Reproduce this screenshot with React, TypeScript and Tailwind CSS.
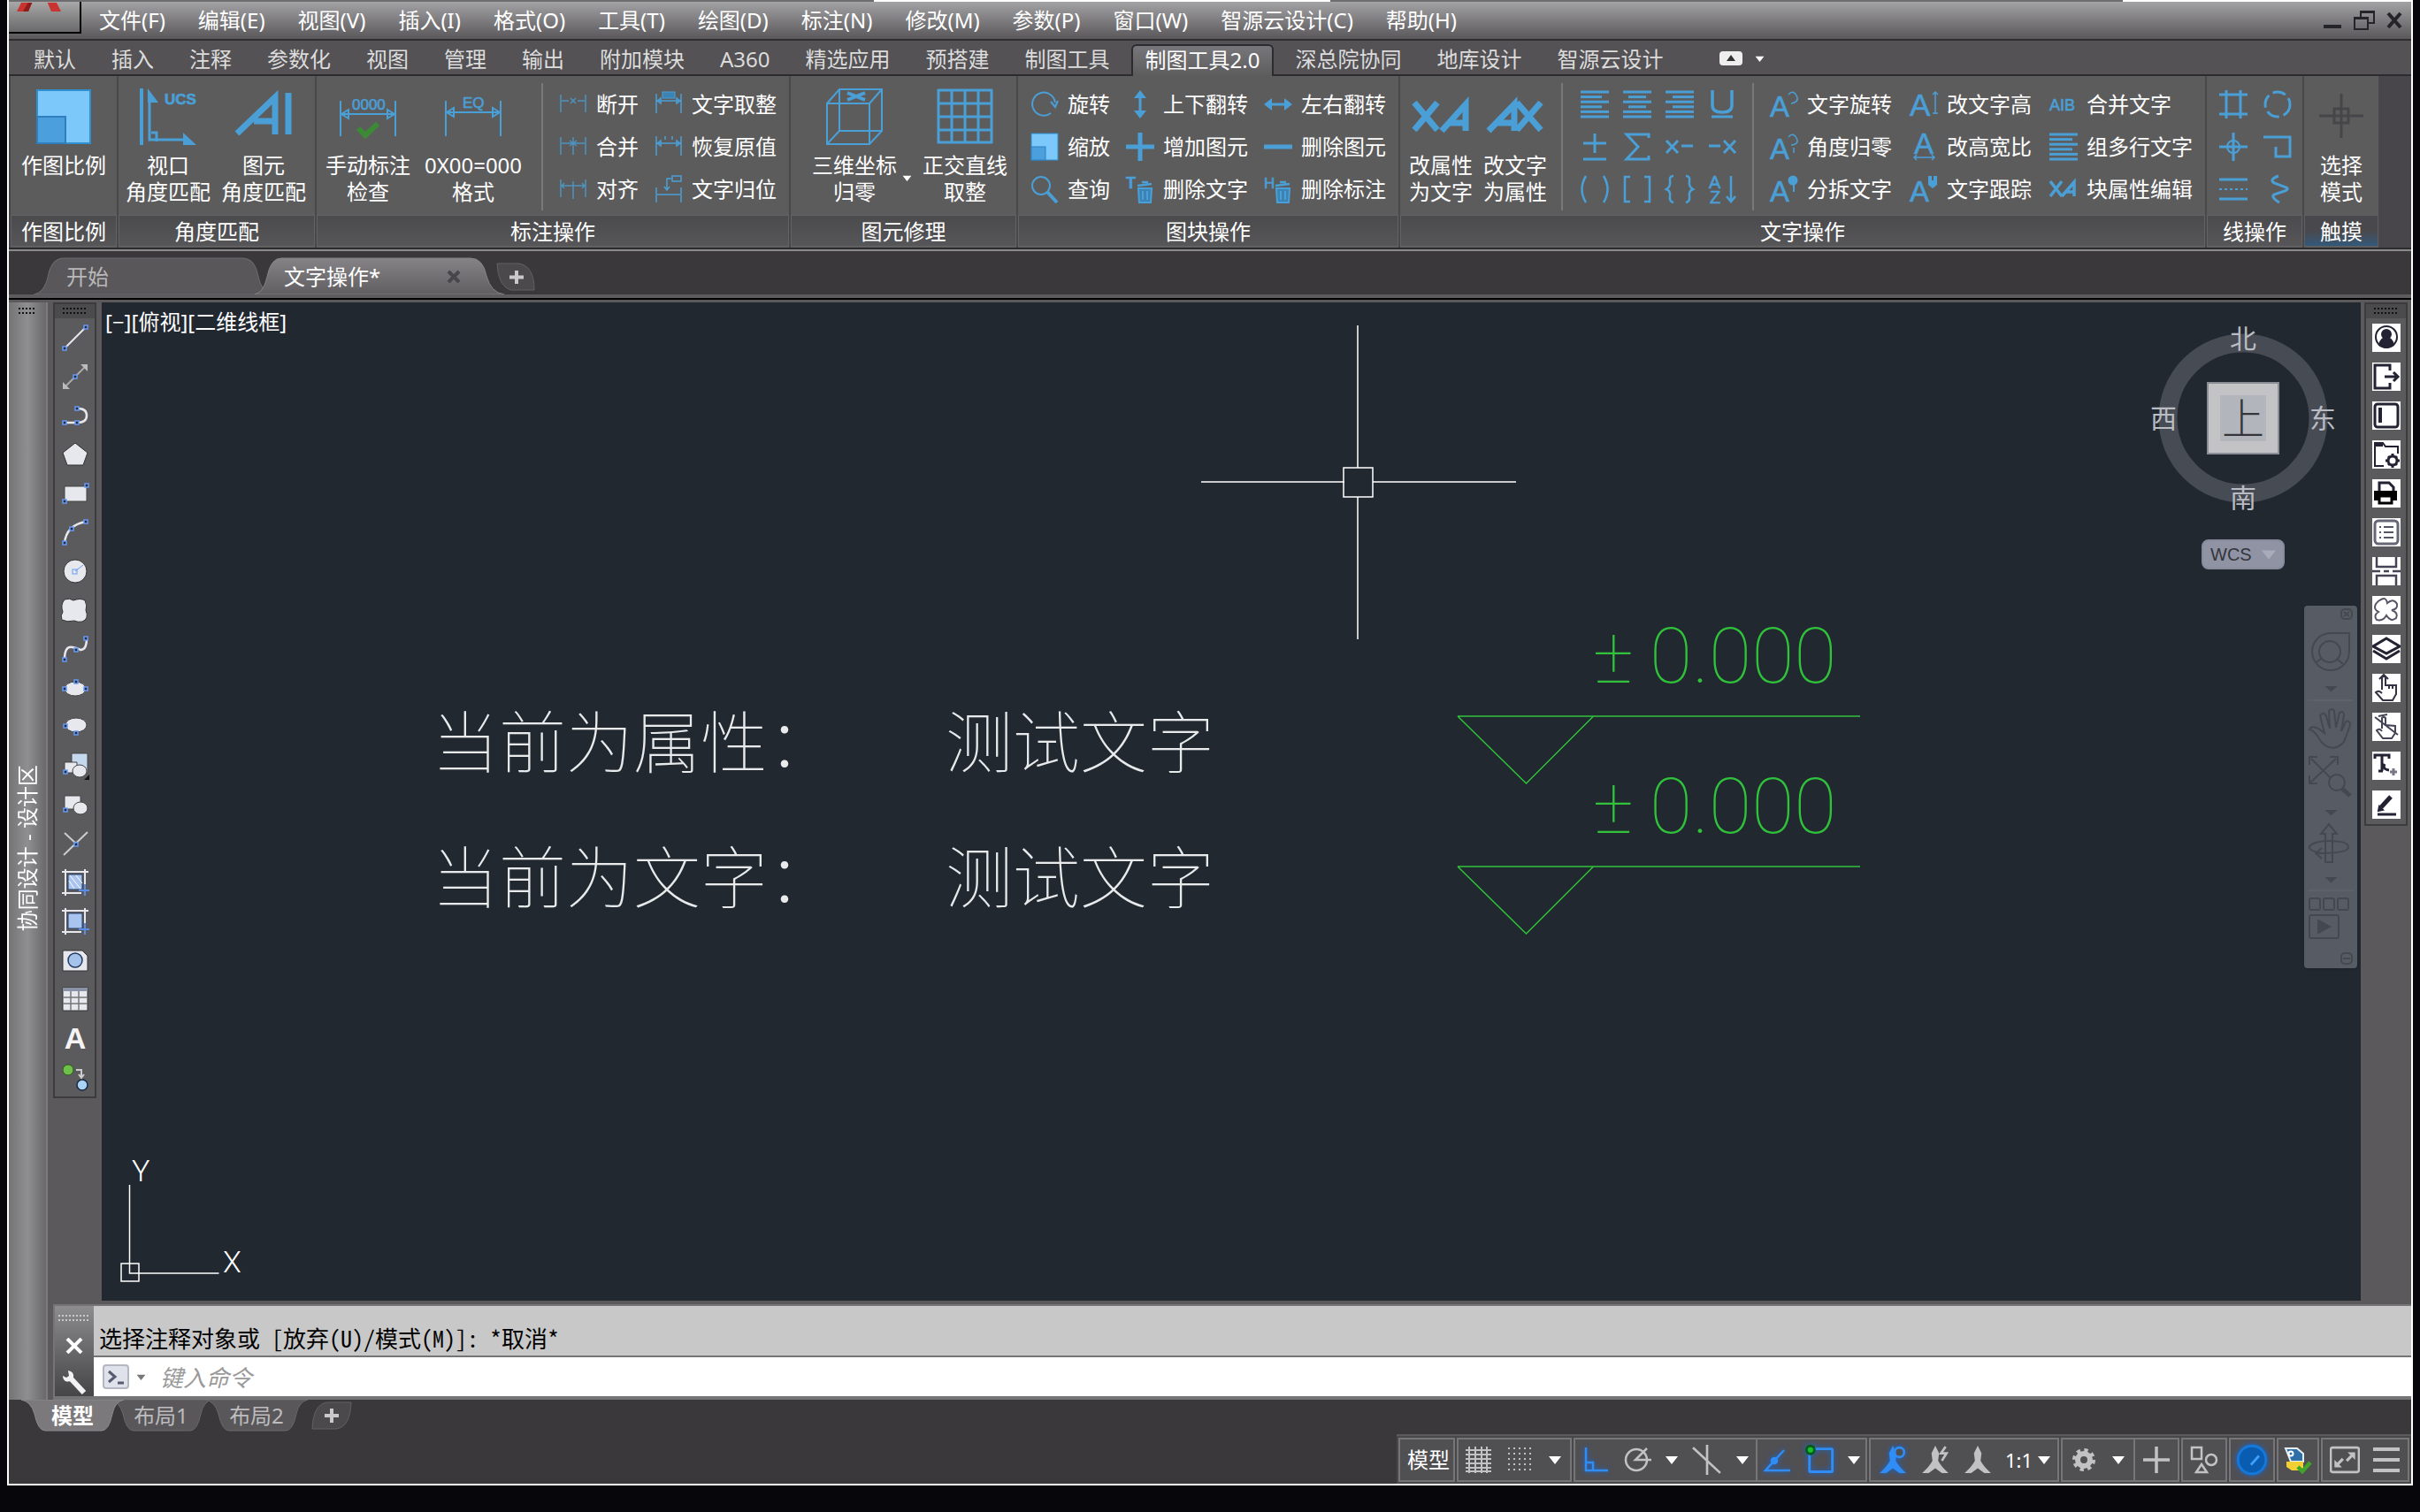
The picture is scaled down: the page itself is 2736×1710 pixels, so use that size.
import React from "react";

type Kids = { children?: React.ReactNode };

const B = "#4a9fd6";
const SANS = "font-['Noto_Sans','Noto_Sans_CJK_SC',sans-serif]";

/* ---------- icon frames ---------- */

function Ic({ children, s = 32 }: Kids & { s?: number }) {
  return (
    <svg aria-hidden="true" width={s} height={s} viewBox="0 0 32 32" fill="none" stroke={B} strokeWidth="2" className="shrink-0 overflow-visible">
      {children}
    </svg>
  );
}

function Big({ children }: Kids) {
  return (
    <svg aria-hidden="true" width="64" height="64" viewBox="0 0 64 64" fill="none" stroke={B} strokeWidth="2" className="shrink-0 overflow-visible">
      {children}
    </svg>
  );
}

function Letter({ x, y, size, children, bold }: Kids & { x: number; y: number; size: number; bold?: boolean }) {
  return (
    <text x={x} y={y} fontSize={size} fill={B} stroke={B} strokeWidth="0.6" fontFamily="Liberation Sans, sans-serif" fontWeight={bold ? 700 : 400}>
      {children}
    </text>
  );
}

function Caret({ w = 14, fill = "#fff" }: { w?: number; fill?: string }) {
  return (
    <svg aria-hidden="true" width={w} height={w - 4} viewBox="0 0 14 10" className="shrink-0">
      <path d="M0 1h14L7 10z" fill={fill} />
    </svg>
  );
}

/* ---------- ribbon ---------- */

const scaleIcon = (
  <>
    <rect x="1" y="1" width="30" height="30" fill="#7cc8fb" stroke="#2f8fcf" strokeWidth="1" />
    <rect x="1" y="16" width="16" height="15" fill="#4a9fdc" stroke="#2f7fbf" strokeWidth="1" />
  </>
);

const dimBase = <path d="M2 4v22M30 4v22M3 12h26M3 12l4-3v6zM29 12l-4-3v6z" strokeWidth="1.5" />;

const bars = (list: number[][]) => list.map(([x, w], i) => <path key={i} d={`M${x} ${2 + i * 5.6}h${w}`} strokeWidth="3" />);

const ICONS = {
  brk: <Ic><path d="M2 5v20M30 5v20M3 12h8M21 12h8M13 9l6 6M19 9l-6 6" strokeWidth="1.5" opacity="0.8" /></Ic>,
  merge: <Ic><path d="M2 5v20M30 5v20M16 5v20M3 12h26M12 9l4 3-4 3M20 9l-4 3 4 3" strokeWidth="1.5" opacity="0.8" /></Ic>,
  align: <Ic><path d="M2 5v20M30 5v20M16 7v20M3 12h26M6 9l-3 3 3 3M26 9l3 3-3 3" strokeWidth="1.5" opacity="0.8" /></Ic>,
  round: <Ic>{dimBase}<rect x="9" y="2" width="14" height="7" fill="#3a83b4" strokeWidth="1" /></Ic>,
  restore: <Ic>{dimBase}<path d="M12 4v4M20 4v4" strokeWidth="1.5" /></Ic>,
  home: <Ic><path d="M2 14v17M30 14v17M3 22h26M20 1h10v6H20zM19 4h-5v12M11 13l3 4 3-4" strokeWidth="1.5" /></Ic>,
  rotate: <Ic><path d="M23 26a13 13 0 1 1 5-12M23 13l5 6 3-7" /></Ic>,
  scale: <Ic>{scaleIcon}</Ic>,
  find: <Ic><circle cx="12" cy="12" r="10" /><path d="M19 19l11 12" strokeWidth="4" /></Ic>,
  ud: <Ic><path d="M16 4v24" strokeWidth="3" /><path d="M16 0l7 9H9zM16 32l7-9H9z" fill={B} stroke="none" /></Ic>,
  lr: <Ic><path d="M4 16h24" strokeWidth="3" /><path d="M0 16l9-7v14zM32 16l-9-7v14z" fill={B} stroke="none" /></Ic>,
  add: <Ic><path d="M16 0v32M0 16h32" strokeWidth="5" /></Ic>,
  del: <Ic><path d="M0 16h32" strokeWidth="5" /></Ic>,
  delT: <Ic><Letter x={0} y={15} size={18} bold>T</Letter><path d="M13 12l16-2M18 8h7" strokeWidth="2.5" /><path d="M14 15h15l-1 16H15z" fill="#3a83b4" /><path d="M19 18v10M24 18v10" /></Ic>,
  delH: <Ic><Letter x={0} y={15} size={17}>H</Letter><path d="M13 12l16-2M18 8h7" strokeWidth="2.5" /><path d="M14 15h15l-1 16H15z" fill="#3a83b4" /><path d="M19 18v10M24 18v10" /></Ic>,
  left: <Ic>{bars([[0, 32], [0, 24], [0, 32], [0, 24], [0, 32], [0, 32]])}</Ic>,
  center: <Ic>{bars([[0, 32], [6, 20], [0, 32], [6, 20], [0, 32], [0, 32]])}</Ic>,
  right: <Ic>{bars([[0, 32], [8, 24], [0, 32], [8, 24], [0, 32], [0, 32]])}</Ic>,
  under: <Ic><path d="M5 0v17q0 8 11 8t11-8V0" strokeWidth="3.5" /><path d="M4 30h24" strokeWidth="3" /></Ic>,
  pm: <Ic><path d="M16 1v22M3 12h26M3 30h26" strokeWidth="3" /></Ic>,
  sum: <Ic><path d="M29 6V2H4l13 14L4 30h25v-4" strokeWidth="3" /></Ic>,
  xm: <Ic><path d="M1 9l13 14M14 9L1 23M18 15h13" strokeWidth="3" /></Ic>,
  mx: <Ic><path d="M18 9l13 14M31 9L18 23M1 15h13" strokeWidth="3" /></Ic>,
  paren: <Ic><path d="M6 1q-9 15 0 30M26 1q9 15 0 30" strokeWidth="2.5" /></Ic>,
  brack: <Ic><path d="M8 2H2v28h6M24 2h6v28h-6" strokeWidth="2.5" /></Ic>,
  brace: <Ic><path d="M9 1q-5 0-4 6t-4 9q5 2 4 8t4 7M23 1q5 0 4 6t4 9q-5 2-4 8t-4 7" strokeWidth="2.5" /></Ic>,
  sort: <Ic><Letter x={1} y={15} size={20}>A</Letter><Letter x={2} y={32} size={20}>Z</Letter><path d="M26 1v28M21 24l5 6 5-6" strokeWidth="2.5" /></Ic>,
  aRot: <Ic><Letter x={0} y={30} size={33}>A</Letter><path d="M21 5q5-6 9 1t-6 9" strokeWidth="1.5" /></Ic>,
  aZero: <Ic><Letter x={0} y={30} size={33}>A</Letter><path d="M21 5q5-6 9 1t-6 8M27 17v6" strokeWidth="1.5" /></Ic>,
  aPin: <Ic><Letter x={0} y={30} size={33}>A</Letter><circle cx="26" cy="6" r="5.500" fill={B} stroke="none" /><path d="M27 10v9" /></Ic>,
  aHigh: <Ic><Letter x={0} y={29} size={35}>A</Letter><path d="M29 2v25M26 5l3-3 3 3M26 26h6" strokeWidth="1.5" /></Ic>,
  aWide: <Ic><Letter x={5} y={24} size={33}>A</Letter><path d="M5 28h23M8 25l-3 3 3 3M25 25l3 3-3 3" strokeWidth="1.5" /></Ic>,
  aTrack: <Ic><Letter x={0} y={30} size={33}>A</Letter><path d="M21 1v10l5 4 5-4V1h-4v5h-2V1z" fill={B} stroke="none" /></Ic>,
  aib: <Ic><Letter x={0} y={23} size={18}>AIB</Letter></Ic>,
  multi: <Ic>{bars([[0, 32], [0, 26], [0, 32], [0, 26], [0, 32], [0, 32]])}</Ic>,
  xa: <Ic><path d="M1 7l13 17M14 7L1 24M14 24L28 8v16M19 19h9" strokeWidth="3.500" /></Ic>,
  hash: <Ic><path d="M8 0v32M24 0v32M0 5h32M0 27h32" strokeWidth="3" /></Ic>,
  dash: <Ic><circle cx="16" cy="16" r="14" strokeWidth="3" strokeDasharray="15 5" /></Ic>,
  cross: <Ic><path d="M16 0v32M0 16h32" strokeWidth="3" /><circle cx="16" cy="16" r="7" /></Ic>,
  hook: <Ic><path d="M0 5h30v22H14V16" strokeWidth="3" /></Ic>,
  lines: <Ic><path d="M0 5h32M0 27h32" strokeWidth="3" /><path d="M0 16h32" strokeDasharray="3 3" /></Ic>,
  wave: <Ic><path d="M17 1Q6 5 12 9l14 5q3 2-2 4l-12 4q-4 3 6 9" strokeWidth="3" /></Ic>,
};

function Small({ icon, label }: { icon: keyof typeof ICONS; label: string }) {
  return (
    <button type="button" className="flex items-center gap-2.5">
      {ICONS[icon]}
      {label}
    </button>
  );
}

function Large({ lines, children, w = "" }: Kids & { lines: string[]; w?: string }) {
  return (
    <button type="button" className={`flex flex-col items-center gap-2 pt-1.5 leading-[30px] ${w}`}>
      {children}
      <span className="flex flex-col items-center">
        {lines.map((l) => (
          <span key={l}>{l}</span>
        ))}
      </span>
    </button>
  );
}

function Panel({ title, pad = "px-2.5", touch, children }: Kids & { title: string; pad?: string; touch?: boolean }) {
  return (
    <section aria-label={title} className="flex flex-col border-r-2 border-[#48474a] bg-[#5d5c5d]">
      <div className={`flex h-[157px] items-start gap-3 pt-2 ${pad}`}>{children}</div>
      <h2
        className={
          touch
            ? "flex h-9 items-center justify-center border border-[#5f5e60] bg-linear-to-b from-[#49484c] via-[#49484c] to-[#31597a] pt-0.5"
            : "flex h-9 items-center justify-center border border-[#636264] bg-linear-to-b from-[#4b4a4d] to-[#565558] pt-0.5"
        }
      >
        {title}
      </h2>
    </section>
  );
}

const Rule = ({ m = "mx-1.5" }: { m?: string }) => <div className={`h-36 w-0.5 bg-[#79787a] ${m}`} />;
const ROWS = "grid grid-flow-col grid-rows-3 auto-rows-[48px] h-36";

function Ribbon() {
  return (
    <div className="flex h-[196px] border-b-2 border-[#2c2b2d] bg-[#48464a] pl-0.5 text-2xl text-white">
      <Panel title="作图比例" pad="px-3">
        <Large lines={["作图比例"]}>
          <svg aria-hidden="true" width="64" height="64" viewBox="0 0 32 32">{scaleIcon}</svg>
        </Large>
      </Panel>
      <Panel title="角度匹配" pad="pl-2 pr-2.5">
        <Large lines={["视口", "角度匹配"]}>
          <Big>
            <path d="M2 0v64" strokeWidth="4" />
            <path d="M11 6v52h42M13 50h6v10" strokeWidth="3" />
            <path d="M9 0v16h12zM64 64H49V50z" fill={B} stroke="none" />
            <Letter x={28} y={18} size={17} bold>UCS</Letter>
          </Big>
        </Large>
        <Large lines={["图元", "角度匹配"]}>
          <Big>
            <path d="M2 51L45 10v42M21 37h24M60 5v47" strokeWidth="7" />
          </Big>
        </Large>
      </Panel>
      <Panel title="标注操作" pad="pl-2.5 pr-3.5">
        <Large lines={["手动标注", "检查"]}>
          <Big>
            <path d="M1 14v40M63 14v40M3 29h58M2 29l8-5v10zM62 29l-8-5v10z" />
            <Letter x={14} y={24} size={17}>0000</Letter>
            <path d="M21 45l8 8 14-13" stroke="#3c8a35" strokeWidth="6" />
          </Big>
        </Large>
        <Large lines={["0X00=000", "格式"]} w="w-[118px]">
          <Big>
            <path d="M1 14v40M63 14v40M3 27h58M2 27l8-5v10zM62 27l-8-5v10z" />
            <Letter x={20} y={22} size={17}>EQ</Letter>
          </Big>
        </Large>
        <Rule />
        <div className={`${ROWS} gap-x-4.5`}>
          <Small icon="brk" label="断开" />
          <Small icon="merge" label="合并" />
          <Small icon="align" label="对齐" />
          <Small icon="round" label="文字取整" />
          <Small icon="restore" label="恢复原值" />
          <Small icon="home" label="文字归位" />
        </div>
      </Panel>
      <Panel title="图元修理" pad="pl-6 pr-2.5">
        <div className="flex items-start gap-1.5">
          <Large lines={["三维坐标", "归零"]}>
            <Big>
              <path d="M1 17L15 1h48v47L49 63H1zM1 17h48v46M49 17L63 1M15 1v47h48M15 48L1 63" />
              <path d="M24 5l20 8M44 5l-20 8" strokeWidth="4" />
            </Big>
          </Large>
          <button type="button" aria-label="更多归零选项" className="mt-26">
            <Caret w={11} />
          </button>
        </div>
        <Large lines={["正交直线", "取整"]}>
          <Big>
            <path d="M2 1v61M17 1v61M32 1v61M47 1v61M62 1v61M1 2h62M1 17h62M1 32h62M1 47h62M1 61h62" strokeWidth="3" />
          </Big>
        </Large>
      </Panel>
      <Panel title="图块操作" pad="pl-3.5 pr-3.5">
        <div className={`${ROWS} gap-x-4.5`}>
          <Small icon="rotate" label="旋转" />
          <Small icon="scale" label="缩放" />
          <Small icon="find" label="查询" />
          <Small icon="ud" label="上下翻转" />
          <Small icon="add" label="增加图元" />
          <Small icon="delT" label="删除文字" />
          <Small icon="lr" label="左右翻转" />
          <Small icon="del" label="删除图元" />
          <Small icon="delH" label="删除标注" />
        </div>
      </Panel>
      <Panel title="文字操作" pad="pl-2.5 pr-3.5">
        <Large lines={["改属性", "为文字"]}>
          <Big>
            <path d="M2 16l26 31M28 16L2 47M33 48L60 18v30M41 39h19" strokeWidth="7" />
          </Big>
        </Large>
        <Large lines={["改文字", "为属性"]}>
          <Big>
            <path d="M2 48L31 18v30M12 39h19M34 16l27 31M61 16L34 47" strokeWidth="7" />
          </Big>
        </Large>
        <Rule m="ml-1 mr-2" />
        <div className={`${ROWS} gap-x-4`}>
          {(
            [
              ["left", "左对齐"], ["pm", "正负号"], ["paren", "圆括号"],
              ["center", "居中"], ["sum", "求和"], ["brack", "方括号"],
              ["right", "右对齐"], ["xm", "前缀"], ["brace", "花括号"],
              ["under", "下划线"], ["mx", "后缀"], ["sort", "排序"],
            ] as [keyof typeof ICONS, string][]
          ).map(([k, label]) => (
            <button key={k} type="button" aria-label={label} className="flex items-center">
              {ICONS[k]}
            </button>
          ))}
        </div>
        <Rule />
        <div className={`${ROWS} gap-x-5`}>
          <Small icon="aRot" label="文字旋转" />
          <Small icon="aZero" label="角度归零" />
          <Small icon="aPin" label="分拆文字" />
          <Small icon="aHigh" label="改文字高" />
          <Small icon="aWide" label="改高宽比" />
          <Small icon="aTrack" label="文字跟踪" />
          <Small icon="aib" label="合并文字" />
          <Small icon="multi" label="组多行文字" />
          <Small icon="xa" label="块属性编辑" />
        </div>
      </Panel>
      <Panel title="线操作" pad="pl-3.5 pr-3">
        <div className={`${ROWS} gap-x-4.5`}>
          {(
            [
              ["hash", "井字线"], ["cross", "十字线"], ["lines", "平行线"],
              ["dash", "虚线圆"], ["hook", "折线"], ["wave", "波浪线"],
            ] as [keyof typeof ICONS, string][]
          ).map(([k, label]) => (
            <button key={k} type="button" aria-label={label} className="flex items-center">
              {ICONS[k]}
            </button>
          ))}
        </div>
      </Panel>
      <Panel title="触摸" pad="px-2.5" touch>
        <Large lines={["选择", "模式"]}>
          <svg aria-hidden="true" width="64" height="64" viewBox="0 0 64 64" fill="none" stroke="#46454a" strokeWidth="3">
            <path d="M32 6v50M7 31h50M24 23h16v16H24z" />
          </svg>
        </Large>
      </Panel>
    </div>
  );
}

/* ---------- bars above the drawing ---------- */

const MENUS = ["文件(F)", "编辑(E)", "视图(V)", "插入(I)", "格式(O)", "工具(T)", "绘图(D)", "标注(N)", "修改(M)", "参数(P)", "窗口(W)", "智源云设计(C)", "帮助(H)"];
const TABS = ["默认", "插入", "注释", "参数化", "视图", "管理", "输出", "附加模块", "A360", "精选应用", "预搭建", "制图工具", "制图工具2.0", "深总院协同", "地库设计", "智源云设计"];

function MenuBar() {
  return (
    <header className="flex h-11 items-center border-b-2 border-[#2f2d30] bg-linear-to-b from-[#a3a2a4] to-[#5a585b] text-2xl text-white">
      <button type="button" aria-label="应用程序菜单" className="mr-5 h-9 w-[82px] self-start border-r-2 border-b-2 border-black bg-linear-to-b from-[#a8a8a8] to-[#6a696b]">
        <svg aria-hidden="true" width="64" height="32" viewBox="0 0 64 32">
          <path d="M9 10L16-4h12l-6 14zM42-4h10l7 14H48z" fill="#c8342f" />
          <path d="M16 10L24-4h4l-6 14z" fill="#8d1d1b" />
        </svg>
      </button>
      <nav aria-label="主菜单" className="flex gap-[37px]">
        {MENUS.map((m) => (
          <button key={m} type="button" className="whitespace-nowrap">{m}</button>
        ))}
      </nav>
      <div className="ml-auto flex items-center gap-3 pr-2.5">
        <button type="button" aria-label="最小化">
          <svg width="22" height="24" viewBox="0 0 22 24"><path d="M1 19h20" stroke="#252428" strokeWidth="4" /></svg>
        </button>
        <button type="button" aria-label="还原">
          <svg width="26" height="24" viewBox="0 0 26 24" fill="none" stroke="#252428" strokeWidth="2"><path d="M9 8V2h15v13h-6M9 3h15" /><path d="M2 9h15v13H2zM2 10h15" /></svg>
        </button>
        <button type="button" aria-label="关闭">
          <svg width="18" height="20" viewBox="0 0 18 20"><path d="M2 2l14 16M16 2L2 18" stroke="#252428" strokeWidth="4" /></svg>
        </button>
      </div>
    </header>
  );
}

function RibbonTabs() {
  return (
    <div role="tablist" className="flex h-10 items-end border-b-2 border-[#2c2b2d] bg-[#545255] pl-2 text-2xl text-[#dcdcdc]">
      {TABS.map((t) =>
        t === "制图工具2.0" ? (
          <button key={t} type="button" role="tab" aria-selected="true" className="mx-1 -mb-0.5 h-[36px] rounded-t-md border-2 border-b-0 border-[#2c2b2d] bg-linear-to-b from-[#77767a] to-[#5d5c5d] px-3.5 pb-0.5 leading-8 text-white">
            {t}
          </button>
        ) : (
          <button key={t} type="button" role="tab" aria-selected="false" className="mx-1 h-[34px] px-4 leading-8">
            {t}
          </button>
        ),
      )}
      <button type="button" aria-label="最小化功能区" className="ml-11 flex h-9 items-center gap-3.5">
        <svg aria-hidden="true" width="26" height="16" viewBox="0 0 26 16"><rect width="26" height="16" rx="4" fill="#eee" /><path d="M13 4l5 7H8z" fill="#333" /></svg>
        <Caret w={11} />
      </button>
    </div>
  );
}

function DocTabs() {
  return (
    <div className="flex h-[51px] items-end border-t-2 border-[#8b8a8c] bg-[#3a383b] pl-7 text-2xl">
      <button type="button" className="relative h-[42px] w-[270px] pt-0.5 pl-[37px] text-left text-[#b8b7b9]">
        <svg aria-hidden="true" viewBox="0 0 268 42" preserveAspectRatio="none" className="absolute inset-0 h-full w-full">
          <path d="M0 42q12-2 16-20 4-21 18-21h200q14 0 18 20 4 19 16 21z" fill="#59575a" stroke="#6d6b6e" />
        </svg>
        <span className="relative">开始</span>
      </button>
      <div className="relative -ml-5 flex h-[42px] w-[287px] items-center justify-between pt-0.5 pr-[54px] pl-[33px]">
        <svg aria-hidden="true" viewBox="0 0 287 42" preserveAspectRatio="none" className="absolute inset-0 h-full w-full">
          <defs>
            <linearGradient id="doc" x2="0" y2="1"><stop stopColor="#858386" /><stop offset="1" stopColor="#605e61" /></linearGradient>
          </defs>
          <path d="M0 42q10-2 14-20Q18 1 30 1h214q14 0 18 20 5 19 20 21z" fill="url(#doc)" stroke="#858386" />
        </svg>
        <button type="button" className="relative text-white">文字操作*</button>
        <button type="button" aria-label="关闭标签" className="relative">
          <svg width="16" height="16" viewBox="0 0 16 16"><path d="M2 2l12 12M14 2L2 14" stroke="#48464a" strokeWidth="4" /></svg>
        </button>
      </div>
      <button type="button" aria-label="新建图形" className="-ml-3.5 mb-1">
        <svg width="44" height="32" viewBox="0 0 44 32"><path d="M1 1h24q18 2 18 30H16Q2 26 1 1z" fill="#4b494c" stroke="#626063" /><path d="M23 9v15M15 16.500h16" stroke="#c9c9c9" strokeWidth="4" /></svg>
      </button>
    </div>
  );
}

/* ---------- left draw toolbar ---------- */

const W = "#e6e8ee";
const Grip = ({ x, y }: { x: number; y: number }) => <rect x={x - 2} y={y - 2} width="4" height="4" fill="#1d2a4a" stroke="#6a9bf0" strokeWidth="1.5" />;

const DRAW: [string, React.ReactNode][] = [
  ["直线", <><path d="M4 28L28 4" stroke={W} strokeWidth="2" /><Grip x={4} y={28} /><Grip x={28} y={4} /></>],
  ["构造线", <><path d="M5 27L27 5" stroke="#aaa" strokeWidth="2" /><path d="M2 30v-8l8 8zM30 2v8l-8-8z" fill="#bbb" /><Grip x={16} y={16} /></>],
  ["多段线", <><path d="M4 24h14q11 0 11-8t-10-8" fill="none" stroke={W} strokeWidth="2.5" /><Grip x={4} y={24} /><Grip x={18} y={24} /><Grip x={18} y={8} /></>],
  ["多边形", <path d="M16 3l14 11-5 14H7L2 14z" fill={W} stroke="#333" />],
  ["矩形", <><path d="M4 8h25v17H4z" fill={W} stroke="#444" /><Grip x={4} y={25} /><Grip x={29} y={7} /></>],
  ["圆弧", <><path d="M4 28Q6 8 28 4" fill="none" stroke={W} strokeWidth="2.500" /><Grip x={4} y={28} /><Grip x={12} y={12} /><Grip x={28} y={4} /></>],
  ["圆", <><circle cx="16" cy="16" r="13" fill={W} stroke="#333" /><path d="M16 16l9-7" stroke="#6a9bf0" /><rect x="13" y="14" width="5" height="5" fill="none" stroke="#6a9bf0" /></>],
  ["修订云线", <path d="M4 4q6-2 10 1 8-3 13 0 3 6 1 11 4 10-4 13-5 1-9-1-8 2-14-1-2-5 1-9-3-8 2-14z" fill={W} stroke="#333" />],
  ["样条曲线", <><path d="M4 28q0-16 9-14t9 3q7 0 7-13" fill="none" stroke={W} strokeWidth="2.500" /><Grip x={4} y={28} /><Grip x={17} y={17} /><Grip x={28} y={4} /></>],
  ["椭圆", <><ellipse cx="16" cy="17" rx="12" ry="8" fill={W} stroke="#444" /><Grip x={4} y={17} /><Grip x={17} y={9} /><Grip x={28} y={17} /></>],
  ["椭圆弧", <><ellipse cx="17" cy="14" rx="12" ry="8" fill={W} stroke="#444" /><Grip x={5} y={15} /><Grip x={17} y={23} /></>],
  ["插入块", <><path d="M12 2h18v22H12z" fill="#c6d8ee" stroke="#444" /><path d="M4 12h14v12H4z" fill={W} stroke="#444" /><ellipse cx="21" cy="22" rx="8" ry="7" fill={W} stroke="#444" /><Grip x={5} y={23} /><path d="M32 26v6h-6z" fill="#111" /></>],
  ["创建块", <><path d="M4 6h18v15H4z" fill={W} stroke="#444" /><ellipse cx="22" cy="20" rx="8" ry="7" fill={W} stroke="#444" /><Grip x={5} y={22} /></>],
  ["点", <><path d="M3 29L30 3M4 4l14 13" stroke="#ccc" strokeWidth="2" /><Grip x={17} y={17} /></>],
  ["图案填充", <><path d="M1 4h30M1 28h22M5 1v30M27 1v22" stroke={W} strokeWidth="2" /><path d="M8 7h16v17H8z" fill="#a9c4ee" stroke="#26406f" /><path d="M9 14l6 9M10 8l12 15M17 8l7 9" stroke="#fff" /><path d="M27 18v13M20 25h12" stroke="#5a8de8" strokeWidth="2" /></>],
  ["渐变色", <><path d="M1 4h30M1 28h22M5 1v30M27 1v22" stroke={W} strokeWidth="2" /><path d="M8 7h16v17H8z" fill="#a9c4ee" stroke="#26406f" /><path d="M27 18v13M20 25h12" stroke="#5a8de8" strokeWidth="2" /></>],
  ["面域", <><path d="M2 5h22l6 6v17H2z" fill={W} stroke="#333" /><circle cx="16" cy="16" r="8" fill="#a4c3ea" stroke="#23395e" strokeWidth="1.500" /></>],
  ["表格", <><path d="M2 3h28v26H2z" fill={W} stroke="#333" /><path d="M2 5h28" stroke="#8a93a8" strokeWidth="4" /><path d="M2 14h28M2 21h28M11 7v22M20 7v22" stroke="#777" strokeWidth="1.500" /></>],
  ["多行文字", <text x="16" y="28" textAnchor="middle" fontSize="34" fontWeight="700" fontFamily="Liberation Sans, sans-serif" fill="#f4f4f4">A</text>],
  ["添加选定对象", <><circle cx="8" cy="8" r="6" fill="#6fc04a" stroke="#2a5a18" /><circle cx="24" cy="25" r="6" fill="#a9d2f4" stroke="#1a2a44" strokeWidth="1.500" /><path d="M17 8h6v8M20 13l3 4 3-4" fill="none" stroke="#ccc" strokeWidth="2" /></>],
];

function DotGrip({ n, fill = "#111" }: { n: number; fill?: string }) {
  return (
    <svg aria-hidden="true" width={n * 4} height="8" viewBox={`0 0 ${n * 4} 8`} className="shrink-0">
      {Array.from({ length: n }, (_, i) => (
        <path key={i} d={`M${i * 4} 0h2v2h-2zM${i * 4} 5h2v2h-2z`} fill={fill} />
      ))}
    </svg>
  );
}

function DrawBar() {
  return (
    <div role="toolbar" aria-label="绘图" className="mx-1.5 flex w-[49px] flex-col items-center self-start border-2 border-[#3c3b3d] bg-[#5b5a5c]">
      <div className="flex h-4 w-full items-center justify-center bg-[#4b4a4c]"><DotGrip n={7} /></div>
      {DRAW.map(([label, art]) => (
        <button key={label} type="button" aria-label={label} className="flex h-11 items-center">
          <svg width="32" height="32" viewBox="0 0 32 32" className="overflow-visible">{art}</svg>
        </button>
      ))}
    </div>
  );
}

/* ---------- right toolbar ---------- */

const TOOLS: [string, React.ReactNode][] = [
  ["用户", <><circle cx="16" cy="15" r="12" /><circle cx="16" cy="12" r="5" fill="#223" /><path d="M8 24q2-8 8-8t8 8q-8 6-16 0z" fill="#223" /></>],
  ["导出", <path d="M20 9V3H3v26h17v-6M14 16h15M24 11l5 5-5 5" strokeWidth="3" />],
  ["侧栏", <><rect x="3" y="3" width="26" height="26" rx="3" strokeWidth="3" /><path d="M9 7v17" strokeWidth="4" /></>],
  ["文件夹设置", <><path d="M13 29H3V3h9l3 4h14v8" /><path d="M3 5h9" strokeWidth="4" /><circle cx="23" cy="23" r="5" strokeWidth="3" /><path d="M23 15v3M23 28v3M15 23h3M28 23h3M18 18l1 1M27 27l1 1M28 18l-1 1M18 28l1-1" strokeWidth="3" /></>],
  ["打印", <><path d="M8 14V4h11l5 5v5" strokeWidth="3" /><path d="M3 14h24v9H3z" fill="#000" stroke="#000" /><path d="M8 19h14v8H8z" fill="#fff" stroke="#000" strokeWidth="3" /></>],
  ["清单", <><rect x="3" y="3" width="26" height="26" rx="4" stroke="#667" strokeWidth="3" /><path d="M8 10h2M13 10h11M8 16h2M13 16h11M8 22h2M13 22h11" stroke="#556" /></>],
  ["打断", <path d="M5 0v11h22V0M5 32V21h22v11M0 16h9M13 16h6M23 16h9" stroke="#445" strokeWidth="2.5" />],
  ["云线", <path d="M10 4q6-3 7 4 7-6 11 1 1 6-6 7 8 3 5 9-6 5-11-3-4 7-11 5-4-5 2-9-6-3-3-9 3-4 6-5z" stroke="#556" />],
  ["图层", <><path d="M16 4l15 9-15 8-15-8z" strokeWidth="3" /><path d="M1 18l15 9 15-9" strokeWidth="3" /></>],
  ["点选", <path d="M11 18V4q2-2 4 0v9h12v10l-4 7H12l-8-9q3-3 7 1M19 13v4M23 13v4M8 6l5-5 5 5" stroke="#334" />],
  ["取消点选", <path d="M11 18V6q2-2 4 0v8l11 1v8l-4 6H12l-7-9q3-3 6 1M3 5l26 20M7 4l10-2" stroke="#445" />],
  ["文字添加", <><path d="M3 8V4h16v4M11 4v18M7 22h5M14 14q-3 6 5 7" strokeWidth="3" /><path d="M20 23h8M24 19v8" stroke="#778" strokeWidth="3" /></>],
  ["编辑", <><path d="M6 27h21" strokeWidth="3" /><path d="M10 19L21 7" strokeWidth="5" /><path d="M7 23l1-5 4 4z" fill="#223" /></>],
];

function ToolBar() {
  return (
    <div role="toolbar" aria-label="协同工具" className="mx-1 flex w-[49px] flex-col items-center self-start border-2 border-[#3c3b3d] bg-[#5b5a5c]">
      <div className="flex h-4 w-full items-center justify-center bg-[#4b4a4c]"><DotGrip n={7} /></div>
      {TOOLS.map(([label, art]) => (
        <button key={label} type="button" aria-label={label} className="flex h-11 items-center">
          <svg width="32" height="32" viewBox="0 0 32 32" fill="none" stroke="#223" strokeWidth="2" className="bg-white">{art}</svg>
        </button>
      ))}
    </div>
  );
}

/* ---------- drawing area ---------- */

function Level({ y }: { y: number }) {
  return <path d={`M1533 ${y}h455M1533 ${y}l77.500 76 76-76`} stroke="#2fc23a" strokeWidth="1.500" fill="none" />;
}

function NavBar() {
  return (
    <div role="toolbar" aria-label="导航栏" className="absolute top-[343px] right-1 w-15 rounded bg-[#575c64] shadow">
      <svg aria-hidden="true" width="60" height="410" viewBox="0 0 60 410" fill="none" stroke="#444950" strokeWidth="2">
        <rect x="42" y="4" width="12" height="11" rx="4" /><path d="M45 7l6 5M51 7l-6 5" />
        <path d="M30 31h21v20a21 21 0 1 1-21-20z" /><circle cx="29" cy="52" r="12" /><path d="M14 64l6-5M44 66l-6-5" />
        <path d="M26 92h9l-4.500 4z" fill="#444950" />
        <path d="M4 107h52M4 322h52" stroke="#646971" strokeWidth="1" />
        <path d="M18 152q-6-11-12-12 2-5 10-1l7 5-5-20q4-5 7 1l4 14-1-20q4-4 6 0l2 19 4-17q5-3 5 3l-3 18 5-11q5-2 5 4-4 12-7 19-8 9-17 6-6-2-10-8z" />
        <path d="M8 173l30 30M36 173L7 200M6 180v-9h9M29 171h9v9M6 192v9h9" /><circle cx="37" cy="200" r="9" fill="#575c64" /><path d="M43 207l9 8" strokeWidth="5" />
        <path d="M26 232h9l-4.500 4zM26 308h9l-4.500 4z" fill="#444950" />
        <path d="M24 290v-32h-5l9-11 9 11h-5v32z" /><path d="M20 280q-16-3-14-8 6-6 22-6 22 0 22 7t-35 7M20 274l-7 6 7 6" />
        <rect x="6" y="331" width="12" height="13" rx="2" /><rect x="22" y="331" width="12" height="13" rx="2" /><rect x="38" y="331" width="12" height="13" rx="2" />
        <rect x="6" y="350" width="33" height="26" rx="2" /><path d="M16 356l13 7-13 7z" fill="#444950" />
        <rect x="42" y="393" width="12" height="12" rx="4" /><path d="M44 399h8" />
      </svg>
    </div>
  );
}

function ViewCube() {
  return (
    <div className="absolute top-[26px] right-[28px] flex flex-col items-center text-[30px] leading-[30px] text-[#b9bcc2]">
      <div className="relative grid h-[210px] w-[210px] grid-cols-[30px_1fr_30px] grid-rows-[30px_1fr_30px] place-items-center">
        <svg aria-hidden="true" viewBox="0 0 210 210" className="absolute inset-0 h-full w-full">
          <circle cx="105" cy="105" r="85" fill="none" stroke="#474b54" strokeWidth="21" />
        </svg>
        <span className="relative col-start-2 row-start-1">北</span>
        <span className="relative col-start-1 row-start-2">西</span>
        <button type="button" aria-label="上视图" className="relative col-start-2 row-start-2 flex h-[82px] w-[82px] items-center justify-center border-2 border-[#8b8e94] bg-[#c3c3c5]">
          <span className="flex h-[52px] w-[52px] items-center justify-center bg-[#b2b5bb] text-[48px] font-light text-[#33353a]">上</span>
        </button>
        <span className="relative col-start-3 row-start-2">东</span>
        <span className="relative col-start-2 row-start-3">南</span>
      </div>
      <button type="button" className="mt-8 flex h-[34px] w-[94px] items-center justify-between rounded-lg border-2 border-[#878b9b] bg-[#8f93a3] px-2 font-['Liberation_Sans',sans-serif] text-[20px] text-[#33353d]">
        WCS
        <Caret w={16} fill="#a9adbb" />
      </button>
    </div>
  );
}

const CAD = "absolute font-['Noto_Sans_CJK_SC',sans-serif] font-thin whitespace-nowrap text-[76px] leading-[110px] text-[#e8eaec]";
const NUM = "absolute font-['Roboto','Lato',sans-serif] font-thin whitespace-nowrap text-[88px] leading-[88px] text-[#2fc23a]";

function Canvas() {
  return (
    <main className="relative min-w-0 flex-1 overflow-hidden bg-[#212830]">
      <svg aria-hidden="true" className="absolute inset-0 h-full w-full" fill="none" stroke="#fff" strokeWidth="1.500">
        <path d="M1243 203h162M1437 203h162M1420 26v161M1420 220v161M1404 187h33v33h-33z" />
        <path d="M31.500 998v100h101M22 1087h20v20H22z" />
        <Level y={468} />
        <Level y={638} />
      </svg>
      <button type="button" className="absolute top-1.5 left-1 text-2xl text-white">[−][俯视][二维线框]</button>
      <p className={`${CAD} top-[438px] left-[373px]`}>当前为属性：</p>
      <p className={`${CAD} top-[438px] left-[954px]`}>测试文字</p>
      <p className={`${CAD} top-[591px] left-[373px]`}>当前为文字：</p>
      <p className={`${CAD} top-[591px] left-[954px]`}>测试文字</p>
      <p className={`${NUM} top-[356px] left-[1686px]`}>±</p>
      <p className={`${NUM} top-[356px] left-[1750px]`}>0.000</p>
      <p className={`${NUM} top-[526px] left-[1686px]`}>±</p>
      <p className={`${NUM} top-[526px] left-[1750px]`}>0.000</p>
      <span className="absolute top-[962px] left-[34px] font-['Roboto',sans-serif] text-[34px] leading-10 font-light text-white">Y</span>
      <span className="absolute top-[1065px] left-[137px] font-['Roboto',sans-serif] text-[34px] leading-10 font-light text-white">X</span>
      <ViewCube />
      <NavBar />
    </main>
  );
}

/* ---------- command line ---------- */

function CommandLine() {
  return (
    <div className="flex border-2 border-r-0 border-b-4 border-[#757476] font-['Noto_Sans_Mono_CJK_SC','Noto_Sans_CJK_SC',monospace] text-[26px]">
      <div className="flex w-11 shrink-0 flex-col items-center justify-between bg-linear-to-b from-[#8d8c8e] to-[#454447] pt-2.5 pb-0.5">
        <DotGrip n={9} fill="#c9c9c9" />
        <button type="button" aria-label="关闭命令行">
          <svg width="20" height="18" viewBox="0 0 20 18"><path d="M2 1l16 16M18 1L2 17" stroke="#fff" strokeWidth="4" /></svg>
        </button>
        <button type="button" aria-label="自定义">
          <svg width="28" height="28" viewBox="0 0 28 28"><path d="M10 10l15 16" stroke="#f2f2f2" strokeWidth="6" /><path d="M7 1q7 1 6 8-3 6-9 4-3-2-3-6l4 2 3-2z" fill="#f2f2f2" /></svg>
        </button>
      </div>
      <div className="min-w-0 flex-1">
        <output className="flex h-[58px] items-end border-b-2 border-[#757476] bg-[#c8c8c8] px-1.5 leading-10 text-black">
          <span className="whitespace-pre">{"选择注释对象或 [放弃(U)/模式(M)]: *取消*"}</span>
        </output>
        <div className="flex h-[44px] items-center bg-white pl-2.5">
          <button type="button" aria-label="最近使用的命令" className="flex items-center gap-2">
            <svg aria-hidden="true" width="30" height="28" viewBox="0 0 30 28"><rect x="1" y="1" width="28" height="26" rx="3" fill="#dfe2ea" stroke="#b3b7c4" strokeWidth="2" /><path d="M7 8l7 6-7 6M17 21h7" fill="none" stroke="#555b70" strokeWidth="3" /></svg>
            <Caret w={11} fill="#777" />
          </button>
          <input aria-label="命令" placeholder="键入命令" className="ml-4 min-w-0 flex-1 bg-transparent outline-none placeholder:text-[#9a9a9a] placeholder:italic" />
        </div>
      </div>
    </div>
  );
}

function LayoutTab({ label, active, overlap = "" }: { label: string; active?: boolean; overlap?: string }) {
  return (
    <button type="button" className={`relative flex h-9 w-[116px] items-center justify-center ${overlap} ${active ? "z-10 font-bold text-white" : "text-[#bdbcbe]"}`}>
      <svg aria-hidden="true" viewBox="0 0 116 36" preserveAspectRatio="none" className="absolute inset-0 h-full w-full">
        <path d="M0 0q11 2 15 16 4 19 12 19h64q8 0 12-19Q106 2 116 0z" fill={active ? "#7b797c" : "#59575a"} stroke={active ? "#8d8b8e" : "#6a686b"} />
      </svg>
      <span className="relative">{label}</span>
    </button>
  );
}

/* ---------- status bar ---------- */

const G = "#c2c2c4";
const S = "#2f8df5";

function St({ label, w = 32, color = G, children }: Kids & { label: string; w?: number; color?: string }) {
  return (
    <button type="button" aria-label={label} className="flex items-center">
      <svg width={w} height={w} viewBox="0 0 32 32" fill="none" stroke={color} strokeWidth="2.500" className={color === S ? "drop-shadow-[0_0_3px_#1668d8]" : ""}>{children}</svg>
    </button>
  );
}

function Drop({ label }: { label: string }) {
  return (
    <button type="button" aria-label={label} className="flex items-center">
      <Caret />
    </button>
  );
}

function Cell({ children, c = "gap-3.5 px-2.5" }: Kids & { c?: string }) {
  return <div className={`flex items-center border-2 border-[#767577] bg-[#504f52] ${c}`}>{children}</div>;
}

const person = "M16 1l4 8-1 8q3 6 11 13h-7l-7-5-7 5H2q8-7 11-13l-1-8z";

function StatusBar() {
  return (
    <footer className="ml-auto flex h-14 gap-0.5 border-t-2 border-[#5b5a5c] bg-[#48474a] p-0.5 text-[22px] text-white">
      <Cell c="pl-2 pr-1"><button type="button" className="text-2xl">模型</button></Cell>
      <Cell c="gap-4 pl-1.5 pr-2.5">
        <St label="栅格"><path d="M6 1v30M13 1v30M20 1v30M26 1v30M2 5h29M2 10h29M2 15h29M2 20h29M2 25h29M2 29h29" strokeWidth="2" /></St>
        <St label="捕捉"><path d="M2 3h29M2 9h29M2 15h29M2 21h29M2 27h29" strokeDasharray="2 4" strokeWidth="2" /></St>
        <Drop label="捕捉设置" />
      </Cell>
      <Cell c="gap-4 pl-1.5 pr-2">
        <St label="正交" color={S}><path d="M6 2v26h25M6 19h8v9" strokeWidth="2.5" /></St>
        <St label="极轴"><circle cx="15" cy="16" r="12" /><path d="M32 16H14L27 3" /></St>
        <Drop label="极轴设置" />
        <St label="等轴测" w={34}><path d="M1 3l29 27M16 0v32" /></St>
        <Drop label="等轴测设置" />
      </Cell>
      <Cell c="-ml-1 gap-3.5 px-1.5">
        <St label="对象追踪" color={S}><path d="M31 28H3L24 5" strokeWidth="2.5" /><circle cx="13" cy="17" r="3" fill={S} /></St>
        <St label="对象捕捉" w={36} color={S}><rect x="6" y="5" width="23" height="23" rx="1" strokeWidth="2.5" /><circle cx="7" cy="6" r="4" fill="#12c030" stroke="#0a5a16" /></St>
        <Drop label="对象捕捉设置" />
      </Cell>
      <Cell c="gap-3.5 px-2">
        <St label="注释可见性" w={34} color={S}><path d={person} fill={S} stroke="none" /><circle cx="23" cy="8" r="5" fill="#504f52" /></St>
        <St label="自动缩放" w={34}><path d={person} fill={G} stroke="none" /><path d="M27 2l-5 7h6l-5 8" strokeWidth="2.5" /></St>
        <St label="注释比例" w={34}><path d={person} fill={G} stroke="none" /></St>
        <button type="button" className="flex items-center gap-1.5">1:1<Caret /></button>
      </Cell>
      <Cell c="gap-4 pl-2 pr-2.5">
        <St label="切换工作空间"><circle cx="16" cy="16" r="7" strokeWidth="6" /><circle cx="16" cy="16" r="11" strokeWidth="4" strokeDasharray="4.300 4.339" /></St>
        <Drop label="工作空间" />
      </Cell>
      <Cell c="-ml-1 px-2"><St label="注释监视器"><path d="M16 1v30M1 16h30" strokeWidth="3.500" /></St></Cell>
      <Cell c="px-2"><St label="隔离对象"><rect x="2" y="2" width="11" height="13" /><circle cx="24" cy="16" r="6" /><path d="M13 21l6 9H7z" /></St></Cell>
      <Cell c="px-1.5"><St label="硬件加速" w={36} color={S}><circle cx="16" cy="16" r="14" fill="#0a5cb0" stroke="#1579dc" /><path d="M15 21l8-9" stroke="#3fa0ff" /></St></Cell>
      <Cell c="px-1.5">
        <St label="脚本"><path d="M2 3h13l7 6v9H8z" fill="#2f6fa8" stroke="#e8eef4" strokeWidth="2" /><circle cx="8" cy="9" r="2.500" fill="#2f6fa8" stroke="#fff" strokeWidth="2" /><path d="M3 18h19v10H9l-6-4z" fill="#f2cf32" stroke="none" /><path d="M16 24l5 5 9-10" stroke="#3fa52a" strokeWidth="4.500" /></St>
      </Cell>
      <Cell c="gap-3.5 px-2">
        <St label="全屏显示" w={34}><rect x="1" y="3" width="30" height="26" rx="2" /><path d="M19 8h8v8zM13 24H5v-8z" fill={G} stroke="none" /><path d="M18 17l6-6M8 21l6-6" strokeWidth="3" /></St>
        <St label="自定义"><path d="M1 4h30M1 16h30M1 28h30" strokeWidth="4" /></St>
      </Cell>
    </footer>
  );
}

export default function App() {
  return (
    <div className={`flex min-h-screen flex-col bg-[#07060b] pr-2 pb-[30px] pl-2 leading-8 ${SANS}`}>
      <div className="flex flex-1 flex-col border-2 border-t-0 border-white bg-[#3a383b]">
        <div className="flex h-0.5 bg-[#6d6c6e]">
          <div className="w-[36%]" />
          <div className="w-[19%] bg-white" />
          <div className="flex-1" />
          <div className="w-[12%] bg-white" />
        </div>
        <MenuBar />
        <RibbonTabs />
        <Ribbon />
        <DocTabs />
        <div className="h-1 bg-[#5d5b5e]" />
        <div className="h-0.5 bg-black" />
        <div className="flex flex-1 bg-[#5b595c] pt-[3px]">
          <aside className="flex w-11 shrink-0 flex-col items-center border-r-2 border-[#7c7b7d] bg-linear-to-r from-[#747375] via-[#8f8e90] to-[#69686a] pt-1.5 pb-5 text-2xl text-white">
            <DotGrip n={5} />
            <div className="flex flex-1 items-center">
              <span className="rotate-180 leading-8 whitespace-nowrap [text-orientation:sideways] [writing-mode:vertical-rl]">协同设计 - 设计区</span>
            </div>
          </aside>
          <div className="flex min-w-0 flex-1 flex-col">
            <div className="flex flex-1">
              <DrawBar />
              <Canvas />
              <ToolBar />
            </div>
            <div className="mt-1 ml-1.5">
              <CommandLine />
            </div>
          </div>
        </div>
        <div className="flex h-[39px] items-start pl-3.5 text-2xl">
          <LayoutTab label="模型" active />
          <LayoutTab label="布局1" overlap="-ml-4" />
          <LayoutTab label="布局2" overlap="-ml-2" />
          <button type="button" aria-label="新建布局" className="mt-0.5 ml-1">
            <svg width="46" height="32" viewBox="0 0 46 32"><path d="M1 31Q2 3 18 1h27q-1 28-17 30z" fill="#4b494c" stroke="#626063" /><path d="M23 8v16M15 16h16" stroke="#c9c9c9" strokeWidth="4" /></svg>
          </button>
        </div>
        <StatusBar />
      </div>
    </div>
  );
}
